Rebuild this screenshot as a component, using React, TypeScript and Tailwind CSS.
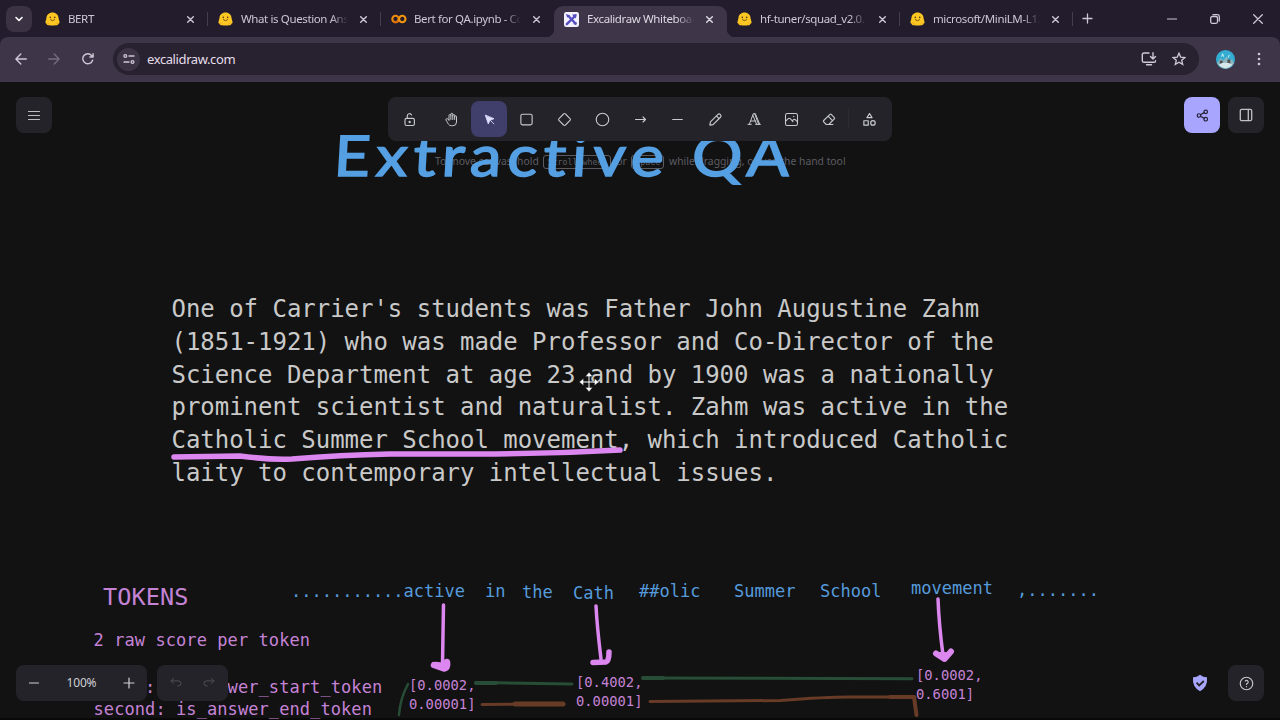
import React from "react";

type IconProps = { children: React.ReactNode; className?: string; box?: string; sw?: number };

function Icon({ children, className = "size-4", box = "0 0 20 20", sw = 1.25 }: IconProps) {
  return (
    <svg viewBox={box} className={className + " shrink-0"} fill="none" stroke="currentColor" strokeWidth={sw} strokeLinecap="round" strokeLinejoin="round">
      {children}
    </svg>
  );
}

function Hug() {
  return (
    <svg viewBox="0 0 15 14" className="h-[14px] w-[15px] shrink-0">
      <path d="M1.4 6.5C1.4 2.8 4 .4 7.5 .4s6.100 2.400 6.100 6.100l.9 3.200c.2 1-.2 1.700-.9 1.900-.3 1.300-1.300 1.900-2.700 1.700-2 .4-4.800.4-6.800 0-1.400.2-2.400-.4-2.700-1.700-.7-.2-1.100-.9-.9-1.900z" fill="#fcc722" />
      <circle cx="5.300" cy="5.400" r=".8" fill="#5a4215" />
      <circle cx="9.700" cy="5.400" r=".8" fill="#5a4215" />
      <path d="M5.400 7.800q2.100 2 4.200 0" fill="none" stroke="#6b4a12" strokeWidth=".9" strokeLinecap="round" />
      <path d="M2.500 11l2 1.200M12.500 11l-2 1.200" stroke="#f0a51c" strokeWidth=".8" />
    </svg>
  );
}

function Colab() {
  return (
    <svg viewBox="0 0 16 10" className="h-[10px] w-4 shrink-0" fill="none" strokeWidth="2.100">
      <circle cx="4.500" cy="5" r="3.200" stroke="#ef8a0c" />
      <circle cx="11.300" cy="5" r="3.200" stroke="#f0950f" />
      <path d="M7 7A3.200 3.200 0 0 1 2.500 7.500" stroke="#d96d0b" />
    </svg>
  );
}

function Excali() {
  return (
    <svg viewBox="0 0 16 16" className="size-[15px] shrink-0">
      <rect width="16" height="16" rx="2.500" fill="#f4f2ff" />
      <path d="M3 13L12 4M5 4.500l7 7.500" stroke="#5750c0" strokeWidth="2.600" strokeLinecap="round" />
      <path d="M8.500 3l5-1-.8 5zM2 2l4.500 1.500L3.500 6zM9.500 12.500l4.500-1.500-1 3z" fill="#5750c0" />
    </svg>
  );
}

const tabs = [
  { title: "BERT", icon: "hug" },
  { title: "What is Question Answering", icon: "hug" },
  { title: "Bert for QA.ipynb - Colab", icon: "colab" },
  { title: "Excalidraw Whiteboard", icon: "ex", active: true },
  { title: "hf-tuner/squad_v2.0.1", icon: "hug" },
  { title: "microsoft/MiniLM-L12", icon: "hug" },
];

function Close() {
  return (
    <Icon className="size-[7px]" box="0 0 7 7" sw={1.4}>
      <path d="M.7.7l5.600 5.600M6.300.7L.7 6.300" />
    </Icon>
  );
}

function TabStrip() {
  return (
    <div className="flex h-[37px] bg-[#231c2c] pl-[6px] text-[#cdc6d4]">
      <div className="mt-[6px] flex h-[26px] w-[26px] items-center justify-center rounded-lg bg-[#3b3344] text-white">
        <Icon className="size-[10px]" box="0 0 10 10" sw={1.600}><path d="M2 3.500l3 3 3-3" /></Icon>
      </div>
      <div className="ml-[3px] flex">
        {tabs.map((t, i) => (
          <div
            key={t.title}
            className={
              "relative flex w-[173px] items-center pl-[10px] " +
              (t.active ? "mt-[6px] h-[31px] rounded-t-[9px] bg-[#3e3548] pb-[5px] text-[#ded9e4]" : "h-[38px]")
            }
          >
            {t.active && (
              <>
                <i className="absolute -left-2 bottom-0 size-2 bg-[radial-gradient(circle_at_0_0,transparent_8px,#3e3548_8.5px)]" />
                <i className="absolute -right-2 bottom-0 size-2 bg-[radial-gradient(circle_at_100%_0,transparent_8px,#3e3548_8.5px)]" />
              </>
            )}
            <span className="flex w-[23px] items-center">
              {t.icon === "hug" ? <Hug /> : t.icon === "colab" ? <Colab /> : <Excali />}
            </span>
            <span className="w-[107px] overflow-hidden whitespace-nowrap text-[11.5px] tracking-[-0.38px] [mask-image:linear-gradient(to_right,black_84%,transparent)]">
              {t.title}
            </span>
            <span className="ml-[12px]"><Close /></span>
            {(i === 0 || i === 1 || i === 4 || i === 5) && <i className="absolute right-0 top-[12px] h-[14px] w-px bg-[#463c4e]" />}
          </div>
        ))}
      </div>
      <div className="ml-[9px] flex items-center">
        <Icon className="size-[11px]" box="0 0 11 11" sw={1.300}><path d="M5.500 1v9M1 5.500h9" /></Icon>
      </div>
      <div className="ml-auto flex items-center gap-[33px] pr-[17px]">
        <Icon className="size-[10px]" box="0 0 10 10" sw={1.200}><path d="M.5 5h9" /></Icon>
        <Icon className="size-[10px]" box="0 0 10 10" sw={1.300}><rect x=".7" y="2.500" width="6.800" height="6.800" rx="1.500" /><path d="M3 .7h4.500Q9.300.7 9.300 2.500V7" /></Icon>
        <Icon className="size-[10px]" box="0 0 10 10" sw={1.300}><path d="M.7.7l8.600 8.600M9.300.7L.7 9.300" /></Icon>
      </div>
    </div>
  );
}

function AddressBar() {
  return (
    <div className="flex h-[45px] items-center rounded-t-[8px] bg-[#3e3548] pb-px pl-[15px] text-[#cfc8d6]">
      <Icon className="size-[12px]" box="0 0 12 12" sw={1.400}><path d="M11.300 6H.9M5.800 1L.9 6l4.900 5" /></Icon>
      <span className="ml-[21px] text-[#766c80]"><Icon className="size-[12px]" box="0 0 12 12" sw={1.300}><path d="M.7 6h10.400M6.200 1l4.900 5-4.900 5" /></Icon></span>
      <span className="ml-[22px]"><Icon className="size-[12px]" box="0 0 12 12" sw={1.400}><path d="M10.600 7.200A5 5 0 1 1 9.700 2.600L11 4M11.100.8V4H7.900" /></Icon></span>
      <div className="ml-[19px] flex h-[32px] w-[1086px] items-center rounded-full bg-[#28212f] pl-[4px]">
        <span className="flex size-[23px] items-center justify-center rounded-full bg-[#3c3445]">
          <Icon className="size-[12px]" box="0 0 12 12" sw={1.300}><circle cx="2.300" cy="3" r="1.400" /><path d="M6 3h5M1 9h5" /><circle cx="9.500" cy="9" r="1.400" /></Icon>
        </span>
        <span className="ml-[7px] pt-px text-[13px] tracking-[-0.4px] text-[#e4deea]">excalidraw.com</span>
        <span className="ml-auto"><Icon className="h-[14px] w-[16px]" box="0 0 16 14" sw={1.400}><path d="M8 1H3Q1.300 1 1.300 2.700v6Q1.300 10.300 3 10.300h10q1.600 0 1.600-1.600M12 .7v6M9.500 4.500L12 7l2.500-2.500M5.500 12.700h5" /></Icon></span>
        <span className="ml-[15px] mr-[13px]"><Icon className="size-[14px]" box="0 0 14 14" sw={1.300}><path d="M7 1.200l1.700 3.900 4.200.4-3.200 2.800 1 4.100L7 10.200l-3.700 2.200 1-4.100L1.100 5.500l4.200-.4z" strokeLinejoin="miter" /></Icon></span>
      </div>
      <svg viewBox="0 0 20 20" className="ml-[17px] size-[19px]">
        <circle cx="10" cy="10" r="10" fill="#35acd1" />
        <path d="M1 14l4-5 3 2 3-4 3 4 3-1 2 4q-3 5-9 6-6-1-9-6" fill="#8fb6bf" />
        <path d="M4 11h3v4H4zM12 10h3v5h-3z" fill="#4c5055" />
        <path d="M3 15q7-3 14 0-2 4-7 4-5 0-7-4" fill="#d5e7e9" />
        <path d="M6 7l1-3 1 3M13 8l1-3" stroke="#d5f6fa" fill="none" />
      </svg>
      <svg viewBox="0 0 4 14" className="ml-[22px] h-[14px] w-1" fill="currentColor"><circle cx="2" cy="2" r="1.300" /><circle cx="2" cy="7" r="1.300" /><circle cx="2" cy="12" r="1.300" /></svg>
    </div>
  );
}

function Toolbar() {
  const b = "flex size-9 shrink-0 items-center justify-center";
  return (
    <div className="absolute left-[388px] top-[15px] flex h-[44px] w-[504px] items-center rounded-lg bg-[#232329] pl-[3px] text-[#c9c9d1]">
      <span className={b}>
        <Icon className="size-[15px]" sw={1.500}><rect x="4" y="8.500" width="12.500" height="9.500" rx="2" /><circle cx="10.200" cy="13.300" r=".8" fill="currentColor" /><path d="M7 8.500V5.200a3 3 0 0 1 5.700-1.300" /></Icon>
      </span>
      <span className={b + " ml-[6px]"}>
        <Icon className="size-[15px]" box="0 0 24 24" sw={1.600}>
          <path d="M8 13V5.500a1.500 1.500 0 0 1 3 0V12M11 5.500v-2a1.500 1.500 0 1 1 3 0V12M14 5.500a1.500 1.500 0 0 1 3 0V12M17 7.500a1.500 1.500 0 0 1 3 0V16a6 6 0 0 1-6 6h-2a6 6 0 0 1-5-2.700C6.700 19 5.400 16.700 3.200 12.900a1.500 1.500 0 0 1 .5-2 1.870 1.870 0 0 1 2.300.3L8 13" />
        </Icon>
      </span>
      <span className={b + " ml-[2px] rounded-lg bg-[#403e6a] text-[#e0dfff]"}>
        <Icon className="size-[15px]" box="0 0 22 22"><path d="M5 5l4.200 12.400 2.300-5 5.600-2.400z" fill="currentColor" /><path d="M13 13l4.500 4.500" /></Icon>
      </span>
      <span className={b + " ml-px"}><Icon className="size-[15px]" box="0 0 24 24" sw={1.800}><rect x="3" y="3.500" width="18" height="17" rx="2.500" /></Icon></span>
      <span className={b + " ml-[2px]"}><Icon className="size-[15px]" box="0 0 24 24" sw={1.700}><path d="M10.500 3.200a2 2 0 0 1 3 0l7.300 7.300a2 2 0 0 1 0 3l-7.300 7.300a2 2 0 0 1-3 0l-7.300-7.300a2 2 0 0 1 0-3z" /></Icon></span>
      <span className={b + " ml-[2px]"}><Icon className="size-[15px]" box="0 0 24 24" sw={1.800}><circle cx="12" cy="12" r="10" /></Icon></span>
      <span className={b + " ml-[2px]"}><Icon className="size-[15px]" box="0 0 24 24" sw={1.800}><path d="M4 12h16M16 16l4-4M16 8l4 4" /></Icon></span>
      <span className={b + " ml-px"}><Icon className="size-[15px]" sw={1.400}><path d="M3.500 10h13" /></Icon></span>
      <span className={b + " ml-[2px]"}><Icon className="size-[15px]" sw={1.500}><path d="M2.500 17.500l.7-4.300L13 3.400a2.500 2.500 0 0 1 3.600 3.600L6.800 16.800zM11.200 5.200l3.600 3.600" /></Icon></span>
      <span className={b + " ml-[3px]"}><Icon className="size-[16px]" box="0 0 24 24" sw={1.500}><path d="M3 20h5M14.500 20h7M7.500 15h7M10.200 6.300L16 20M5 20L11 4h3l6.500 16M13 4l6 16" /></Icon></span>
      <span className={b + " ml-px"}><Icon className="size-[15px]" box="0 0 20 20" sw={1.400}><rect x="2" y="2" width="16" height="16" rx="2.500" /><path d="M2.200 12.300l3.500-3.500q1.300-1 2.600 0l3.700 4M11 11.800l1.500-1.500q1.300-1 2.600 0l2.600 2.500" /><circle cx="12.800" cy="6" r=".3" /></Icon></span>
      <span className={b + " ml-px"}><Icon className="size-[15px]" box="0 0 24 24" sw={1.800}><path d="M19 20H8.500l-4.200-4.300a1.500 1.500 0 0 1 0-2.100l10-9.700a1.500 1.500 0 0 1 2 0l5 5a1.500 1.500 0 0 1 0 2.100L12.500 20M18 13.300L11.700 7" /></Icon></span>
      <span className="ml-[2px] h-5 w-px bg-[#2b2b32]" />
      <span className={b + " ml-[2px]"}><Icon className="size-[15px]" box="0 0 24 24" sw={1.900}><path d="M12 2.500l4 6.500H8z" /><rect x="3" y="14" width="7" height="7" /><circle cx="17.500" cy="17.500" r="3.600" /></Icon></span>
    </div>
  );
}

const paragraph = [
  "One of Carrier's students was Father John Augustine Zahm",
  "(1851-1921) who was made Professor and Co-Director of the",
  "Science Department at age 23 and by 1900 was a nationally",
  "prominent scientist and naturalist. Zahm was active in the",
  "Catholic Summer School movement, which introduced Catholic",
  "laity to contemporary intellectual issues.",
];

const label = "absolute whitespace-pre font-['DejaVu_Sans_Mono',monospace] ";
const blue = label + "text-[17px] leading-[20px] text-[#569bdc] ";
const pink = label + "text-[#c583d6] ";

function Canvas() {
  return (
    <>
      <h1 className="absolute left-[332px] top-[37px] origin-bottom-left -skew-x-3 scale-x-[1.12] whitespace-nowrap font-['Lato',sans-serif] text-[56px] leading-[72px] tracking-[5.4px] text-[#559fe3] [-webkit-text-stroke:1.6px_#559fe3]">Extractive QA</h1>
      <div className={label + "left-[171.500px] top-[211px] text-[24px] leading-[32.8px] tracking-[-0.025px] text-[#c9c9c9]"}>
        {paragraph.map((l) => <div key={l}>{l}</div>)}
      </div>
      <span className={blue + "left-[291px] top-[498.500px]"}>...........active</span>
      <span className={blue + "left-[485px] top-[498.500px]"}>in</span>
      <span className={blue + "left-[522px] top-[499.500px]"}>the</span>
      <span className={blue + "left-[573px] top-[500.500px]"}>Cath</span>
      <span className={blue + "left-[639px] top-[498.500px]"}>##olic</span>
      <span className={blue + "left-[734px] top-[498.500px]"}>Summer</span>
      <span className={blue + "left-[820px] top-[498.500px]"}>School</span>
      <span className={blue + "left-[911px] top-[496px]"}>movement</span>
      <span className={blue + "left-[1017px] top-[498px]"}>,.......</span>
      <span className={pink + "left-[103px] top-[500px] text-[23.5px] leading-[30px] tracking-[0.1px]"}>TOKENS</span>
      <span className={pink + "left-[93.500px] top-[547px] text-[17px] leading-[22px] tracking-[0.08px]"}>2 raw score per token</span>
      <span className={pink + "left-[93.500px] top-[594px] text-[17px] leading-[22px] tracking-[0.08px]"}>first: is_answer_start_token</span>
      <span className={pink + "left-[93.500px] top-[616px] z-10 text-[17px] leading-[22px] tracking-[0.08px]"}>second: is_answer_end_token</span>
      <span className={pink + "left-[409px] top-[594px] text-[13.800px] leading-[18.500px]"}>{"[0.0002,\n0.00001]"}</span>
      <span className={pink + "left-[576px] top-[591px] text-[13.800px] leading-[18.500px]"}>{"[0.4002,\n0.00001]"}</span>
      <span className={pink + "left-[916px] top-[584px] text-[13.800px] leading-[18.500px]"}>{"[0.0002,\n0.6001]"}</span>
      <svg className="absolute inset-0 h-[638px] w-[1280px]" viewBox="0 82 1280 638" fill="none" strokeLinecap="round" strokeLinejoin="round">
        <g stroke="#274d36">
          <path d="M399 715Q400 699 408 684" strokeWidth="2.500" />
          <path d="M476 682.500L572 684" strokeWidth="3" /><path d="M476 683h20" strokeWidth="4" />
          <path d="M643 678L912 678.800" strokeWidth="3" /><path d="M643 678h20" strokeWidth="4" />
        </g>
        <g stroke="#673b25">
          <path d="M482 704.500L563 704" strokeWidth="3" /><path d="M515 704h48" strokeWidth="5" />
          <path d="M650 701.500L780 700.500 Q825 697 850 697L915 697" strokeWidth="3" /><path d="M890 697h24l2.500 18" strokeWidth="4" />
        </g>
        <g stroke="#dc87f0">
          <path d="M174 457L240 456Q270 460 292 459Q340 455 390 454L480 454Q550 454 620 450" strokeWidth="5.500" />
          <path d="M443.500 605L442.500 664" strokeWidth="3.500" /><path d="M434 665L444 668.500Q448 668 447 662M436 665l8 1" strokeWidth="6.500" />
          <path d="M596 606Q597 626 601 659" strokeWidth="3.500" /><path d="M593 662.500L606 662Q609 661 609 652" strokeWidth="5.500" />
          <path d="M938 599Q939 625 943 655" strokeWidth="3.500" /><path d="M936 653.500L944.500 659L951 651.500M940 655h5" strokeWidth="6" />
        </g>
      </svg>
    </>
  );
}

function Hint() {
  const key = "mx-[2px] rounded-[3px] border border-[#5a5a60] px-[3px] font-['DejaVu_Sans_Mono',monospace] text-[8.300px] leading-[12px]";
  return (
    <div className="absolute left-[435px] top-[72px] flex h-4 items-center whitespace-pre text-[10.350px] text-[#5c5c62]">
      <span>To move canvas, hold </span><span className={key}>Scroll wheel</span><span> or </span><span className={key}>Space</span><span> while dragging, or use the hand tool</span>
    </div>
  );
}

export default function App() {
  const island = "absolute flex items-center justify-center rounded-lg bg-[#232329] ";
  return (
    <div className="flex h-[720px] w-[1280px] flex-col overflow-hidden bg-[#231c2c] font-['Noto_Sans',sans-serif]">
      <TabStrip />
      <AddressBar />
      <main className="relative flex-1 overflow-hidden bg-[#121212]">
        <Hint />
        <Canvas />
        <Toolbar />
        <div className={island + "left-[16px] top-[15px] size-9 text-[#bcbcc3]"}><Icon className="size-[14px]" box="0 0 14 14" sw={1.200}><path d="M1.500 3.500h11M1.500 7.500h11M1.500 11.500h11" /></Icon></div>
        <div className={island + "left-[1184px] top-[15px] size-9 bg-[#a8a5ff]! text-[#28243a]"}>
          <Icon className="size-[13px]" box="0 0 14 14" sw={1.300}><circle cx="3.200" cy="7" r="1.900" /><circle cx="10.500" cy="3" r="1.900" /><circle cx="10.500" cy="11" r="1.900" /><path d="M4.900 6.100l3.900-2.200M4.900 7.900l3.900 2.200" /></Icon>
        </div>
        <div className={island + "left-[1228px] top-[15px] size-9 text-[#c0c0c7]"}>
          <Icon className="size-[14px]" box="0 0 14 14" sw={1.300}><rect x="1.300" y="1.300" width="11.400" height="11.400" rx="1.500" /><path d="M9.300 1.500v11" /></Icon>
        </div>
        <div className="absolute left-[16px] top-[583px] flex h-9 w-[131px] items-center justify-between rounded-lg bg-[#232329] px-[12px] text-[#d0d0d5]">
          <Icon className="size-[12px]" box="0 0 12 12" sw={1.100}><path d="M1.500 6h9" /></Icon>
          <span className="text-[12px] tracking-[-0.2px]">100%</span>
          <Icon className="size-[12px]" box="0 0 12 12" sw={1.200}><path d="M1 6h10M6 1v10" /></Icon>
        </div>
        <div className="absolute left-[157px] top-[583px] flex h-9 w-[71px] items-center justify-between rounded-lg bg-[#232329] px-[12px] text-[#505057]">
          <Icon className="size-[14px]" sw={1.400}><path d="M6.500 10.500L3 7 6.500 3.500M3 7h10.500a3.600 3.600 0 0 1 0 7.200h-1" /></Icon>
          <Icon className="size-[14px]" sw={1.400}><path d="M13.500 10.500L17 7 13.500 3.500M17 7H6.500a3.600 3.600 0 0 0 0 7.200h1" /></Icon>
        </div>
        <svg viewBox="0 0 18 18" className="absolute left-[1191px] top-[592px] size-[18px]"><path d="M9 .8q3.500 2.700 7 2.500Q17 13 9 17.200 1 13 2 3.300 5.500 3.500 9 .8" fill="#a8a5ff" /><path d="M5.500 8.700l2.700 2.700L12.800 7" fill="none" stroke="#222" strokeWidth="1.800" /></svg>
        <div className={island + "left-[1228px] top-[583px] size-9 text-[#c6c6cc]"}><Icon className="size-[15px]" box="0 0 24 24" sw={1.900}><circle cx="12" cy="12" r="10" /><path d="M12 17v.01M12 13.500a1.500 1.500 0 0 1 1-1.500 2.600 2.600 0 1 0-3-4" /></Icon></div>
        <svg viewBox="0 0 20 20" className="absolute left-[579px] top-[290px] size-[20px]" fill="#fff" stroke="#111" strokeWidth=".4"><path d="M10 .3l3.600 4.200h-2.900v4.800h4.800V6.400L19.700 10l-4.200 3.600v-2.900h-4.800v4.800h2.900L10 19.700l-3.600-4.200h2.900v-4.800H4.500v2.900L.3 10l4.200-3.600v2.900h4.800V4.500H6.400z" /></svg>
        <div className="absolute inset-x-0 bottom-0 h-[2px] bg-[#09090a]" />
      </main>
    </div>
  );
}
